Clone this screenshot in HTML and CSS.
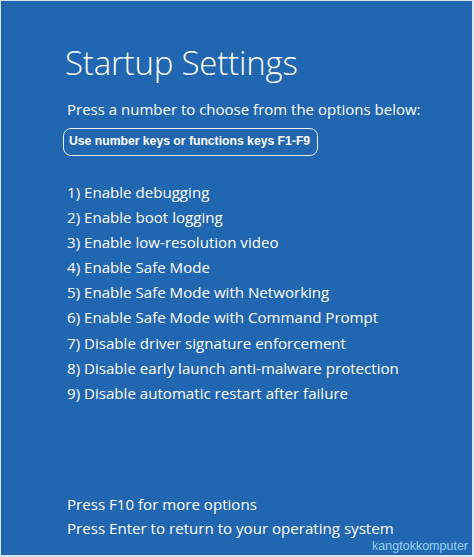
FILE: index.html
```html
<!DOCTYPE html>
<html>
<head>
<meta charset="utf-8">
<link rel="stylesheet" href="styles.css">
</head>
<body>
<div class="screen">
  <h1 class="title">Startup Settings</h1>
  <p class="intro">Press a number to choose from the options below:</p>
  <div class="note">Use number keys or functions keys F1-F9</div>
  <ul class="options">
    <li>1) Enable debugging</li>
    <li>2) Enable boot logging</li>
    <li>3) Enable low-resolution video</li>
    <li>4) Enable Safe Mode</li>
    <li>5) Enable Safe Mode with Networking</li>
    <li>6) Enable Safe Mode with Command Prompt</li>
    <li>7) Disable driver signature enforcement</li>
    <li>8) Disable early launch anti-malware protection</li>
    <li>9) Disable automatic restart after failure</li>
  </ul>
  <div class="footer">
    <p>Press F10 for more options</p>
    <p>Press Enter to return to your operating system</p>
  </div>
  <div class="credit">kangtokkomputer</div>
</div>
</body>
</html>
```
FILE: styles.css
```css
html, body {
  margin: 0;
  padding: 0;
  background: #d6e8f4;
}
.screen {
  position: relative;
  box-sizing: border-box;
  width: 471px;
  height: 554px;
  margin-left: 1px;
  margin-top: 1px;
  background: #2166b1;
  color: #ffffff;
  font-family: "Open Sans", sans-serif;
  padding: 40px 0 0 64px;
  display: flex;
  flex-direction: column;
}
.title {
  margin: 0;
  font-weight: 300;
  font-size: 33px;
  line-height: 44px;
  letter-spacing: -0.2px;
}
.intro {
  margin: 14px 0 0 2px;
  font-size: 15px;
  line-height: 20px;
}
.note {
  align-self: flex-start;
  margin: 9px 0 0 -2px;
  border: 1px solid #e8f0fa;
  border-radius: 8px;
  padding: 4px 7px 5px 5px;
  font-family: "Liberation Sans", Arial, sans-serif;
  font-weight: bold;
  font-size: 12.2px;
  line-height: 17px;
}
.options {
  list-style: none;
  margin: 24px 0 0 2px;
  padding: 0;
  font-size: 15.1px;
  line-height: 25.1px;
}
.footer {
  margin: auto 0 0 2px;
  padding-bottom: 15px;
  font-size: 15.1px;
  line-height: 24px;
}
.footer p {
  margin: 0;
}
.credit {
  position: absolute;
  right: 4px;
  bottom: 2px;
  font-family: "Liberation Sans", Arial, sans-serif;
  font-size: 12.5px;
  color: #98d4f4;
}
```
